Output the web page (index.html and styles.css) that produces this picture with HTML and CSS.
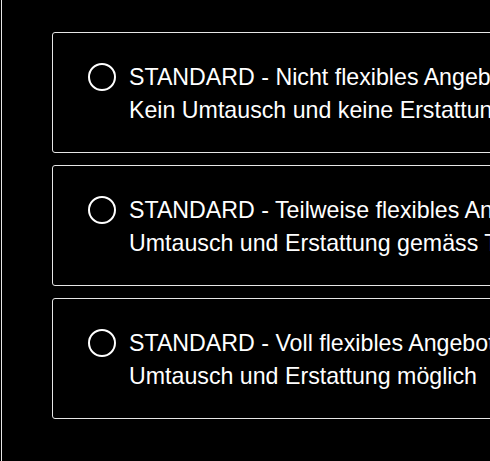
FILE: index.html
```html
<!DOCTYPE html>
<html lang="de">

<head>
    <meta charset="UTF-8">
    <meta name="viewport" content="width=device-width, initial-scale=1.0">
    <title>Angebot wählen</title>
    <link rel="stylesheet" href="styles.css">
</head>

<body>
    <div class="page">
        <form class="offers" id="offer-form">
            <label class="offer">
                <input type="radio" name="offer" value="nicht-flexibel" class="offer-radio">
                <span class="offer-text">
                    <span class="offer-title">STANDARD - Nicht flexibles Angebot</span>
                    <span class="offer-desc">Kein Umtausch und keine Erstattung</span>
                </span>
            </label>

            <label class="offer">
                <input type="radio" name="offer" value="teilweise-flexibel" class="offer-radio">
                <span class="offer-text">
                    <span class="offer-title">STANDARD - Teilweise flexibles Angebot</span>
                    <span class="offer-desc">Umtausch und Erstattung gemäss Tarifbestimmungen</span>
                </span>
            </label>

            <label class="offer">
                <input type="radio" name="offer" value="voll-flexibel" class="offer-radio">
                <span class="offer-text">
                    <span class="offer-title">STANDARD - Voll flexibles Angebot</span>
                    <span class="offer-desc">Umtausch und Erstattung möglich</span>
                </span>
            </label>
        </form>
    </div>
</body>

</html>
```

FILE: styles.css
```css
html,
body {
    margin: 0;
    background-color: #000;
    overflow: hidden;
}

body {
    font-family: "Liberation Sans", Arial, sans-serif;
    color: #fff;
}

.page {
    box-sizing: border-box;
    margin-left: 1px;
    border-left: 1px solid #e6e6e6;
    height: 461px;
    padding: 32px 0 0 50px;
}

.offers {
    display: flex;
    flex-direction: column;
    gap: 12px;
    width: 700px;
}

.offer {
    display: flex;
    align-items: flex-start;
    gap: 13px;
    border: 1px solid #e6e6e6;
    border-radius: 3px;
    padding: 28px 0 26px 35px;
    cursor: pointer;
}

.offer-radio {
    appearance: none;
    -webkit-appearance: none;
    flex: none;
    width: 28px;
    height: 28px;
    margin: 2px 0 0 0;
    border: 2px solid #fff;
    border-radius: 50%;
    background: transparent;
}

.offer-text {
    display: flex;
    flex-direction: column;
    font-size: 23.2px;
    line-height: 32.5px;
    white-space: nowrap;
}
```
